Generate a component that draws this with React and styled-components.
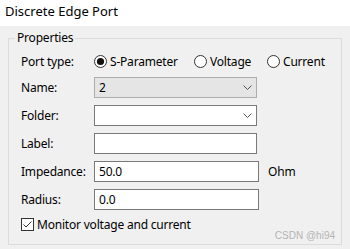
import React from "react";
import styled, { createGlobalStyle } from "styled-components";

const Global = createGlobalStyle`
  html, body { margin: 0; padding: 0; background: #f0f0f0; }
  body { font-family: "Noto Sans", "Open Sans", sans-serif; font-size: 12px; color: #000; }
`;

const Window = styled.div`
  width: 350px;
  height: 249px;
  background: #f0f0f0;
  display: flex;
  flex-direction: column;
  overflow: hidden;
`;

const TitleBar = styled.div`
  height: 26px;
  background: #fff;
  padding: 2px 0 0 5px;
  box-sizing: border-box;
  font-size: 13px;
  line-height: 18px;
`;

const Content = styled.div`
  padding: 12px 8px 0 8px;
`;

const GroupBox = styled.div`
  position: relative;
  height: 207px;
  box-sizing: border-box;
  border: 1px solid #dcdcdc;
  padding: 12px 0 0 12px;
  display: flex;
  flex-direction: column;
  font-size: 12px;
  letter-spacing: -0.2px;
`;

const Legend = styled.span`
  position: absolute;
  top: -10px;
  left: 6px;
  padding: 0 2px;
  background: #f0f0f0;
  line-height: 18px;
`;

const Row = styled.div`
  display: flex;
  align-items: center;
  height: ${(p) => p.$h || 21}px;
  margin-bottom: ${(p) => p.$gap ?? 7}px;
`;

const Label = styled.div`
  width: 73px;
  flex: none;
`;

const RadioGroup = styled.div`
  display: flex;
  align-items: center;
`;

const RadioItem = styled.label`
  display: flex;
  align-items: center;
  gap: 3px;
  width: ${(p) => p.$w}px;
`;

const Box = styled.div`
  width: ${(p) => p.$w}px;
  height: 21px;
  box-sizing: border-box;
  border: 1px solid ${(p) => (p.$disabled ? "#adadad" : "#7a7a7a")};
  background: ${(p) => (p.$disabled ? "#e5e5e5" : "#fff")};
  display: flex;
  align-items: center;
  justify-content: space-between;
  padding: 0 4px 0 4px;
`;

const Unit = styled.span`
  margin-left: 9px;
`;

const CheckRow = styled.label`
  display: flex;
  align-items: center;
  gap: 3px;
`;

const Watermark = styled.span`
  position: absolute;
  right: 6px;
  bottom: 3px;
  font-family: "Liberation Sans", Arial, sans-serif;
  font-size: 10px;
  letter-spacing: 0;
  color: #b4b4b4;
`;

const Radio = ({ checked }) => (
  <svg width="13" height="13" viewBox="0 0 13 13">
    <circle cx="6.5" cy="6.5" r="6" fill="#fff" stroke="#333" strokeWidth="1" />
    {checked && <circle cx="6.5" cy="6.5" r="3.6" fill="#111" />}
  </svg>
);

const Chevron = () => (
  <svg width="9" height="5" viewBox="0 0 9 5">
    <path d="M0.5 0.5 L4.5 4.5 L8.5 0.5" fill="none" stroke="#555" strokeWidth="1" />
  </svg>
);

const Check = () => (
  <svg width="13" height="13" viewBox="0 0 13 13">
    <rect x="0.5" y="0.5" width="12" height="12" fill="#fff" stroke="#333" />
    <path d="M2.5 6.5 L5 9 L10.5 3.5" fill="none" stroke="#333" strokeWidth="1" />
  </svg>
);

export default function App() {
  return (
    <>
      <Global />
      <Window>
        <TitleBar>Discrete Edge Port</TitleBar>
        <Content>
          <GroupBox>
            <Legend>Properties</Legend>
            <Row $gap={5}>
              <Label>Port type:</Label>
              <RadioGroup>
                <RadioItem $w={100}>
                  <Radio checked />
                  S-Parameter
                </RadioItem>
                <RadioItem $w={73}>
                  <Radio />
                  Voltage
                </RadioItem>
                <RadioItem $w={70}>
                  <Radio />
                  Current
                </RadioItem>
              </RadioGroup>
            </Row>
            <Row>
              <Label>Name:</Label>
              <Box $w={163} $disabled>
                <span>2</span>
                <Chevron />
              </Box>
            </Row>
            <Row>
              <Label>Folder:</Label>
              <Box $w={163}>
                <span />
                <Chevron />
              </Box>
            </Row>
            <Row>
              <Label>Label:</Label>
              <Box $w={163} />
            </Row>
            <Row>
              <Label>Impedance:</Label>
              <Box $w={165}>50.0</Box>
              <Unit>Ohm</Unit>
            </Row>
            <Row $gap={4}>
              <Label>Radius:</Label>
              <Box $w={165}>0.0</Box>
            </Row>
            <Row>
              <CheckRow>
                <Check />
                Monitor voltage and current
              </CheckRow>
            </Row>
            <Watermark>CSDN @hi94</Watermark>
          </GroupBox>
        </Content>
      </Window>
    </>
  );
}
